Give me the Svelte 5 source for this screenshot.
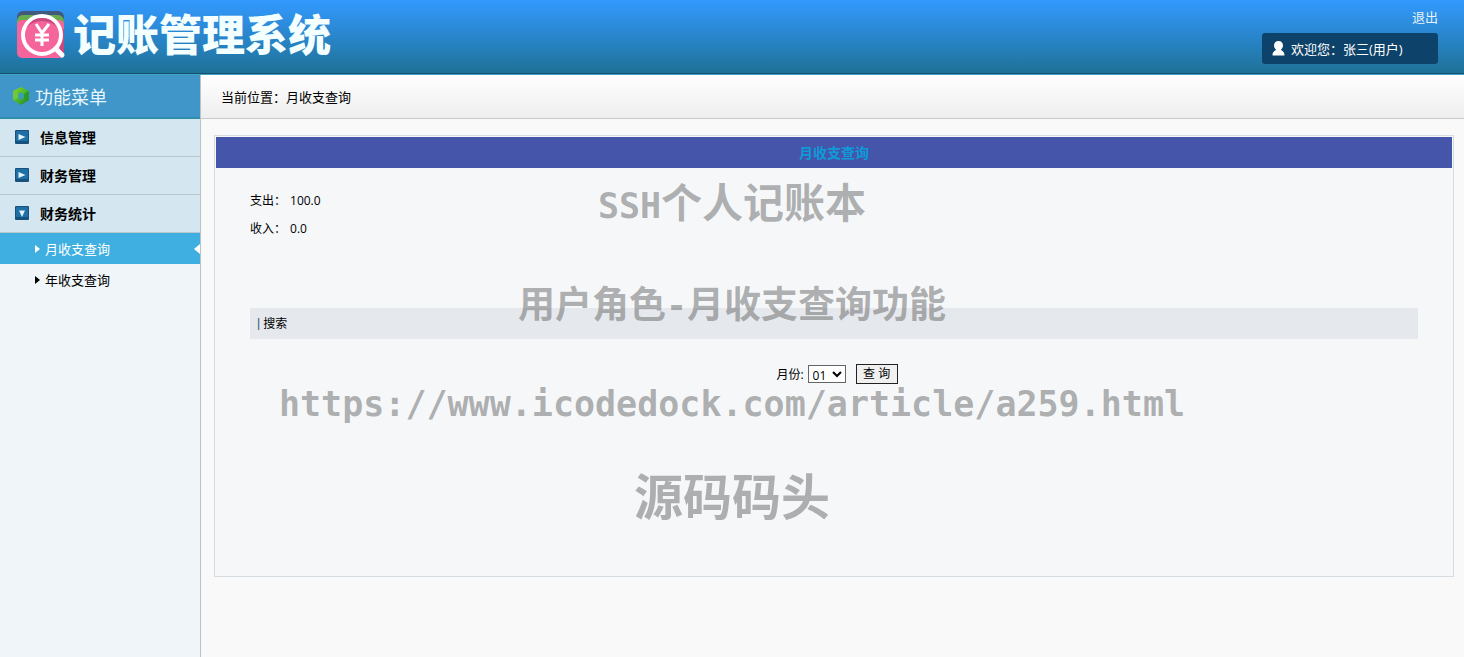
<script lang="ts">
	let month = $state("01");
	let current = $state("月收支查询");

	const months = Array.from({ length: 12 }, (_, i) => String(i + 1).padStart(2, "0"));

	let groups = $state([
		{ title: "信息管理", open: false, links: [] as string[] },
		{ title: "财务管理", open: false, links: [] as string[] },
		{ title: "财务统计", open: true, links: ["月收支查询", "年收支查询"] },
	]);

	const totals = [
		{ label: "支出：", value: "100.0" },
		{ label: "收入：", value: "0.0" },
	];
</script>

<div class="page">
	<header>
		<div class="brand">
			<svg width="50" height="50" viewBox="0 0 50 50" aria-hidden="true">
				<rect x="1" y="1" width="47" height="30" rx="6" fill="#42597e" />
				<rect x="1" y="5" width="47" height="30" rx="6" fill="#67ad50" />
				<rect x="1" y="10" width="47" height="38" rx="5" fill="#f5649b" />
				<path d="M39 12 L48 20 V44 L44 40Z" fill="#c94880" />
				<circle cx="26" cy="25" r="19" fill="#f5649b" stroke="#fff" stroke-width="4" />
				<path d="M11 17 A17 17 0 0 1 41 17 A22 22 0 0 0 11 17Z" fill="#c94880" />
				<path d="M40 39 L46 45" stroke="#fff" stroke-width="5" stroke-linecap="round" />
				<path
					d="M20 14 L26 23 L33 14 M26 22 V36 M19 25 H33 M19 30 H33"
					fill="none"
					stroke="#fff"
					stroke-width="3"
				/>
			</svg>
			<h1>记账管理系统</h1>
		</div>
		<div class="account">
			<a class="logout" href="#logout">退出</a>
			<div class="user">
				<svg width="13" height="15" viewBox="0 0 13 15" aria-hidden="true">
					<path
						d="M6.5 0 C9.3 0 11 2 11 4.6 C11 6.4 10.2 7.7 9 8.6 C9.2 10 12.5 10.2 12.5 14.5 H0.5 C0.5 10.2 3.8 10 4 8.6 C2.8 7.7 2 6.4 2 4.6 C2 2 3.7 0 6.5 0Z"
						fill="#fff"
					/>
				</svg>
				<span>欢迎您：张三(用户)</span>
			</div>
		</div>
	</header>

	<div class="body">
		<aside>
			<h2 class="menu-title">
				<svg width="18" height="20" viewBox="0 0 18 20" aria-hidden="true">
					<defs>
						<linearGradient id="gem" x1="0" y1="0" x2="1" y2="1">
							<stop offset="0" stop-color="#8ed62b" />
							<stop offset="0.5" stop-color="#4db82a" />
							<stop offset="1" stop-color="#1c7c26" />
						</linearGradient>
					</defs>
					<path d="M9 1 L17 5 V14 L9 19 L1 14 V5Z" fill="url(#gem)" />
					<path d="M1 5 L6 8 V12 L1 14Z" fill="#6fc93a" />
					<path d="M17 5 L12 8 V12 L17 14Z" fill="#2c9a2a" />
					<path d="M9 6 L12 8 V12 L9 14 L6 12 V8Z" fill="#3b9fa6" />
				</svg>
				功能菜单
			</h2>
			<nav>
				{#each groups as group}
					<button class="group" onclick={() => (group.open = !group.open)}>
						<svg width="14" height="14" viewBox="0 0 14 14" aria-hidden="true">
							<rect width="14" height="14" rx="1" fill="#17527f" />
							<rect x="1" y="1" width="12" height="10" rx="1" fill="#1f70a6" />
							{#if group.open}
								<path d="M4 4.5 H10 L7 11Z" fill="#e3f2fb" />
							{:else}
								<path d="M3.5 4 L10.5 7 L3.5 10Z" fill="#e3f2fb" />
							{/if}
						</svg>
						{group.title}
					</button>
					{#if group.open}
						<ul>
							{#each group.links as link}
								<li>
									<a href="#{link}" class:active={current === link} onclick={() => (current = link)}>
										<i></i>{link}
									</a>
								</li>
							{/each}
						</ul>
					{/if}
				{/each}
			</nav>
		</aside>

		<main>
			<div class="place">当前位置：月收支查询</div>
			<section class="panel">
				<h3>月收支查询</h3>
				<dl>
					{#each totals as total}
						<div>
							<dt>{total.label}</dt>
							<dd>{total.value}</dd>
						</div>
					{/each}
				</dl>
				<h4><span>|</span>搜索</h4>
				<form onsubmit={(e) => e.preventDefault()}>
					<label for="month">月份:</label>
					<select id="month" bind:value={month}>
						{#each months as m}
							<option>{m}</option>
						{/each}
					</select>
					<button type="submit">查 询</button>
				</form>
			</section>
		</main>
	</div>

	<div class="watermark">
		<p class="name"><span>SSH</span>个人记账本</p>
		<p class="feature">用户角色<span>-</span>月收支查询功能</p>
		<p class="url"><span>https://www.icodedock.com/article/a259.html</span></p>
		<p class="site">源码码头</p>
	</div>
</div>

<style>
	:global(body) {
		margin: 0;
		font-family: "Open Sans", "Noto Sans CJK SC", sans-serif;
		font-size: 13px;
		color: #000;
	}

	h1,
	h2,
	h3,
	h4,
	p,
	ul,
	dl,
	dd {
		margin: 0;
		padding: 0;
	}

	a {
		text-decoration: none;
	}

	.page {
		position: relative;
		min-height: 100vh;
		display: flex;
		flex-direction: column;
		overflow: hidden;
		background: #f9f9f9;
	}

	header {
		display: flex;
		justify-content: space-between;
		height: 73px;
		border-bottom: 1px solid #17506f;
		background: linear-gradient(#3399ff, #1e7297);
	}

	.brand {
		display: flex;
		align-items: center;
		gap: 7px;
		padding: 0 0 3px 16px;
	}

	h1 {
		font-size: 43px;
		font-weight: 900;
		line-height: 60px;
		color: #f4ffff;
	}

	.account {
		display: flex;
		flex-direction: column;
		align-items: flex-end;
		padding: 7px 26px 0 0;
	}

	.logout {
		line-height: 20px;
		color: #e9f2f7;
	}

	.user {
		box-sizing: border-box;
		display: flex;
		align-items: center;
		gap: 6px;
		width: 176px;
		height: 31px;
		margin-top: 6px;
		padding: 0 0 1px 10px;
		border-radius: 3px;
		background: #0d426a;
		color: #fff;
	}

	.body {
		display: flex;
		flex: 1;
		border-top: 1px solid #3fa5c4;
	}

	aside {
		flex: none;
		width: 200px;
		border-right: 1px solid #b7c5ca;
		background: #f0f5f9;
	}

	.menu-title {
		display: flex;
		align-items: center;
		gap: 5px;
		height: 42px;
		padding-left: 12px;
		border-bottom: 2px solid #2e8eae;
		background: #4096c9;
		font-size: 18px;
		font-weight: normal;
		color: #e6f6fd;
	}

	.group {
		box-sizing: border-box;
		display: flex;
		align-items: center;
		gap: 11px;
		width: 100%;
		height: 38px;
		padding: 0 15px 1px;
		border: 0;
		border-bottom: 1px solid #b9c8cf;
		background: #d4e6f0;
		font: bold 14px "Open Sans", "Noto Sans CJK SC", sans-serif;
		color: #000;
	}

	ul {
		list-style: none;
	}

	li a {
		position: relative;
		display: flex;
		align-items: center;
		gap: 5px;
		height: 31px;
		padding-left: 35px;
		color: #000;
	}

	li i {
		border: 4px solid transparent;
		border-left: 5px solid currentColor;
		border-right: 0;
	}

	li a.active {
		background: #3eafe0;
		color: #fff;
	}

	li a.active::after {
		content: "";
		position: absolute;
		top: 11px;
		right: 0;
		border: 5px solid transparent;
		border-left: 0;
		border-right: 6px solid #fff;
	}

	main {
		flex: 1;
		min-width: 0;
	}

	.place {
		height: 43px;
		padding-left: 20px;
		border-bottom: 1px solid #c8cbc9;
		background: linear-gradient(#fff, #eeeeee);
		line-height: 44px;
	}

	.panel {
		box-sizing: border-box;
		min-height: 442px;
		margin: 16px 10px 16px 13px;
		padding: 1px;
		border: 1px solid #d5dde3;
		background: #f5f7f9;
		font-size: 12px;
	}

	h3 {
		background: #4455aa;
		font-size: 14px;
		line-height: 31px;
		text-align: center;
		color: #0e9bd8;
	}

	dl {
		padding: 19px 34px 65px;
		line-height: 28px;
	}

	dl div {
		display: flex;
		gap: 4px;
	}

	h4 {
		display: flex;
		gap: 3px;
		margin: 0 34px;
		padding-left: 7px;
		background: #e5e8ed;
		font-size: 12px;
		font-weight: normal;
		line-height: 31px;
	}

	h4 span {
		font-family: "Liberation Sans", sans-serif;
		color: #14587c;
	}

	form {
		display: flex;
		align-items: center;
		justify-content: center;
		gap: 4px;
		padding: 25px 0 0 6px;
	}

	select {
		width: 38px;
		height: 18px;
		padding: 0;
		border: 1px solid #666;
		border-radius: 0;
		background: #fff;
		font: inherit;
		line-height: 16px;
	}

	form button {
		width: 42px;
		height: 20px;
		margin-left: 6px;
		padding: 0;
		border: 1px solid #222;
		background: #f0f0f0;
		font: inherit;
		line-height: 18px;
	}

	.watermark {
		position: absolute;
		top: 172px;
		left: 0;
		width: 100%;
		pointer-events: none;
		text-align: center;
		font-weight: bold;
		line-height: 60px;
		color: rgba(94, 94, 94, 0.48);
	}

	.watermark p {
		height: 60px;
	}

	.watermark span {
		font-family: "DejaVu Sans Mono", monospace;
		font-size: 35px;
	}

	.name {
		font-size: 41px;
	}

	.watermark .feature {
		margin-top: 42px;
		font-size: 37px;
	}

	.watermark .url {
		margin-top: 40px;
	}

	.watermark .site {
		margin-top: 32px;
		font-size: 49px;
	}
</style>
